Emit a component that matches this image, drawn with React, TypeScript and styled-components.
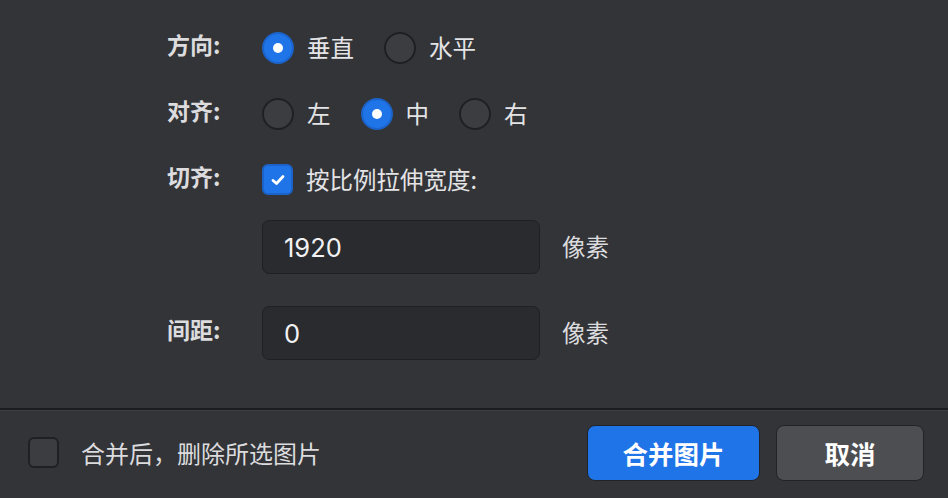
import React, { useState } from "react";
import styled, { createGlobalStyle } from "styled-components";

const GlobalStyle = createGlobalStyle`
  html, body { margin: 0; padding: 0; background: #333438; }
  body { font-family: Inter, "Noto Sans CJK SC", sans-serif; -webkit-font-smoothing: antialiased; }
  * { box-sizing: border-box; }
`;

const Window = styled.div`
  width: 948px;
  height: 498px;
  display: flex;
  flex-direction: column;
  background: #333438;
  color: #e2e2e4;
  font-family: Inter, "Noto Sans CJK SC", sans-serif;
`;

const Main = styled.div`
  height: 410px;
  border-bottom: 2px solid #1c1d1f;
  padding: 32px 0 0 167px;
  display: flex;
  flex-direction: column;
`;

const Row = styled.div<{ $top: number }>`
  display: flex;
  align-items: center;
  margin-top: ${(p) => p.$top}px;
`;

const Label = styled.div`
  width: 95px;
  flex: none;
  font-size: 23px;
  font-weight: 700;
  color: #dcdcde;
  font-family: "Noto Sans CJK SC", sans-serif;
  padding-bottom: 7px;
  line-height: 1;
`;

const Options = styled.div`
  display: flex;
  align-items: center;
  gap: 30px;
`;

const Option = styled.label<{ $size?: number }>`
  display: flex;
  align-items: center;
  gap: 13px;
  font-size: ${(p) => p.$size ?? 23.5}px;
  font-family: "Noto Sans CJK SC", sans-serif;
  color: #e4e4e6;
  line-height: 1;
  cursor: default;
`;

const RadioCircle = styled.span<{ $on: boolean }>`
  width: 32px;
  height: 32px;
  border-radius: 50%;
  flex: none;
  display: flex;
  align-items: center;
  justify-content: center;
  background: ${(p) => (p.$on ? "#1f74e8" : "#3c3d41")};
  border: 2px solid ${(p) => (p.$on ? "#1b63c8" : "#1f2022")};
  &::after {
    content: "";
    display: ${(p) => (p.$on ? "block" : "none")};
    width: 10px;
    height: 10px;
    border-radius: 50%;
    background: #ffffff;
  }
`;

const CheckBox = styled.span<{ $on: boolean }>`
  width: 31px;
  height: 31px;
  border-radius: 6px;
  flex: none;
  display: flex;
  align-items: center;
  justify-content: center;
  background: ${(p) => (p.$on ? "#1f74e8" : "#3c3d41")};
  border: 2px solid ${(p) => (p.$on ? "#1b63c8" : "#1f2022")};
`;

const Field = styled.div`
  width: 278px;
  height: 54px;
  border-radius: 7px;
  background: #2a2b2e;
  border: 1.5px solid #1f2022;
  display: flex;
  align-items: center;
  padding-left: 21px;
  font-family: Inter, sans-serif;
  font-size: 25.5px;
  color: #f2f2f4;
`;

const Unit = styled.span`
  margin-left: 22px;
  font-size: 23.5px;
  font-family: "Noto Sans CJK SC", sans-serif;
  color: #dcdcde;
  line-height: 1;
`;

const Footer = styled.div`
  flex: 1;
  border-top: 1px solid #3e3f43;
  display: flex;
  align-items: center;
  padding: 0 24px 4px 28px;
`;

const FooterCheck = styled(Option)`
  gap: 22px;
  color: #dcdcde;
`;

const Buttons = styled.div`
  margin-left: auto;
  display: flex;
  gap: 16px;
`;

const Button = styled.button<{ $primary?: boolean; $w: number }>`
  width: ${(p) => p.$w}px;
  height: 56px;
  border-radius: 8px;
  border: 1px solid #222326;
  background: ${(p) => (p.$primary ? "#1f74e8" : "#4d4e52")};
  color: #ffffff;
  font-size: 25.5px;
  font-weight: 700;
  font-family: "Noto Sans CJK SC", sans-serif;
  display: flex;
  align-items: center;
  justify-content: center;
  padding: 0;
  cursor: default;
`;

const Check = () => (
  <svg width="14" height="12" viewBox="0 0 14 12">
    <path d="M2 6.5 L5.5 9.5 L12 2.5" fill="none" stroke="#fff" strokeWidth="2.8" strokeLinecap="round" strokeLinejoin="round" />
  </svg>
);

export default function App() {
  const [dir, setDir] = useState("v");
  const [align, setAlign] = useState("c");
  return (
    <Window>
      <GlobalStyle />
      <Main>
        <Row $top={0}>
          <Label>方向:</Label>
          <Options>
            <Option onClick={() => setDir("v")}>
              <RadioCircle $on={dir === "v"} />垂直
            </Option>
            <Option onClick={() => setDir("h")}>
              <RadioCircle $on={dir === "h"} />水平
            </Option>
          </Options>
        </Row>
        <Row $top={34}>
          <Label>对齐:</Label>
          <Options>
            <Option onClick={() => setAlign("l")}>
              <RadioCircle $on={align === "l"} />左
            </Option>
            <Option onClick={() => setAlign("c")}>
              <RadioCircle $on={align === "c"} />中
            </Option>
            <Option onClick={() => setAlign("r")}>
              <RadioCircle $on={align === "r"} />右
            </Option>
          </Options>
        </Row>
        <Row $top={34}>
          <Label>切齐:</Label>
          <Option>
            <CheckBox $on>
              <Check />
            </CheckBox>
            按比例拉伸宽度:
          </Option>
        </Row>
        <Row $top={25}>
          <Label />
          <Field>1920</Field>
          <Unit>像素</Unit>
        </Row>
        <Row $top={32}>
          <Label>间距:</Label>
          <Field>0</Field>
          <Unit>像素</Unit>
        </Row>
      </Main>
      <Footer>
        <FooterCheck $size={24}>
          <CheckBox $on={false} />
          合并后，删除所选图片
        </FooterCheck>
        <Buttons>
          <Button $primary $w={173}>合并图片</Button>
          <Button $w={148}>取消</Button>
        </Buttons>
      </Footer>
    </Window>
  );
}
